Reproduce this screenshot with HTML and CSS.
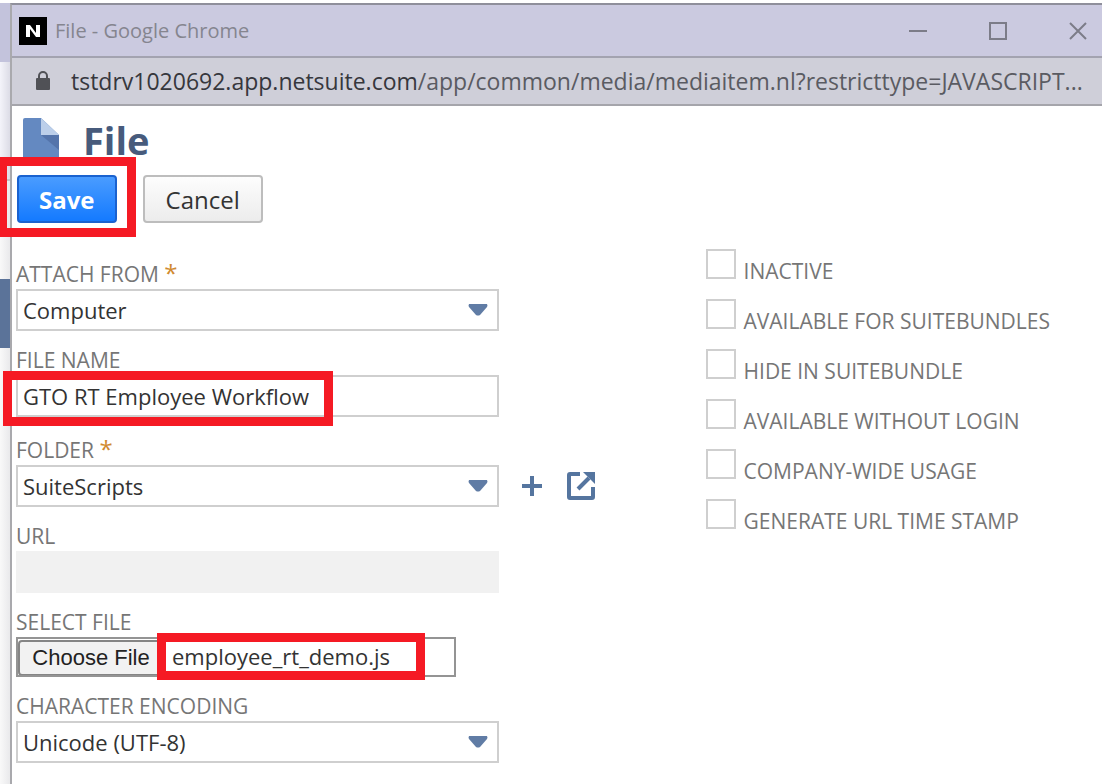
FILE: index.html
```html
<!DOCTYPE html>
<html lang="en">
<head>
    <meta charset="utf-8">
    <title>File</title>
    <link rel="stylesheet" href="styles.css">
</head>
<body>
    <div class="desktop">
        <!-- edge of the window behind the popup -->
        <div class="behind">
            <div class="behind-title"></div>
            <div class="behind-header"></div>
            <div class="behind-body"></div>
            <div class="behind-nav"></div>
        </div>
        <div class="window">
            <div class="titlebar">
                <svg class="favicon" width="28" height="28" viewBox="0 0 28 28">
                    <rect width="28" height="28" fill="#000"/>
                    <path d="M7 20V8h4l6 8V8h4v12h-4l-6-8v8z" fill="#fff"/>
                </svg>
                <span class="titlebar-text">File - Google Chrome</span>
                <div class="window-controls">
                    <button type="button" aria-label="Minimize"><svg width="18" height="18" viewBox="0 0 18 18"><path d="M0 9h18"/></svg></button>
                    <button type="button" aria-label="Maximize"><svg width="18" height="18" viewBox="0 0 18 18"><path d="M1 1h16v16H1z"/></svg></button>
                    <button type="button" aria-label="Close"><svg width="18" height="18" viewBox="0 0 18 18"><path d="M1 1l16 16M17 1L1 17"/></svg></button>
                </div>
            </div>
            <div class="addressbar">
                <svg class="lock" width="16" height="20" viewBox="0 0 16 20">
                    <path d="M4 8V5a4 4 0 0 1 8 0v3" fill="none" stroke="#505156" stroke-width="2"/>
                    <rect x="1" y="7" width="14" height="12" rx="1" fill="#505156"/>
                </svg>
                <span class="url"><span class="url-host">tstdrv1020692.app.netsuite.com</span>/app/common/media/mediaitem.nl?restricttype=JAVASCRIPT...</span>
            </div>
            <form class="page">
                <div class="page-title">
                    <svg width="36" height="40" viewBox="0 0 36 40">
                        <path d="M2 0h16l18 17v23H0V2a2 2 0 0 1 2-2z" fill="#6489c1"/>
                        <path d="M18 17h18v15z" fill="#5474ab"/>
                        <path d="M18 0l18 17H18z" fill="#bccfea"/>
                    </svg>
                    <h1>File</h1>
                </div>
                <div class="actions">
                    <span class="marked">
                        <button type="submit" class="btn btn-primary">Save</button>
                        <span class="mark mark-save"></span>
                    </span>
                    <button type="button" class="btn">Cancel</button>
                </div>
                <div class="columns">
                    <div class="fields">
                        <label class="label required" for="attach_from">ATTACH FROM <span class="star">*</span></label>
                        <div class="control">
                            <select id="attach_from"><option>Computer</option></select>
                            <svg class="arrow" width="20" height="12" viewBox="0 0 20 12"><path d="M1 0h18q1 2 0 3l-7 8q-2 1-4 0L1 3q-1-1 0-3z"/></svg>
                        </div>
                        <label class="label" for="file_name">FILE NAME</label>
                        <div class="control">
                            <input type="text" id="file_name" value="GTO RT Employee Workflow">
                            <span class="mark mark-name"></span>
                        </div>
                        <label class="label required" for="folder">FOLDER <span class="star">*</span></label>
                        <div class="control">
                            <select id="folder"><option>SuiteScripts</option></select>
                            <svg class="arrow" width="20" height="12" viewBox="0 0 20 12"><path d="M1 0h18q1 2 0 3l-7 8q-2 1-4 0L1 3q-1-1 0-3z"/></svg>
                            <div class="links">
                                <a href="#" aria-label="New"><svg width="20" height="20" viewBox="0 0 20 20"><path d="M10 0v20M0 10h20" stroke-width="4"/></svg></a>
                                <a href="#" aria-label="Open"><svg width="28" height="28" viewBox="0 0 28 28"><path d="M13 2H3q-1 0-1 1v22q0 1 1 1h22q1 0 1-1V15" stroke-width="4"/><path d="M11 17L22 6" stroke-width="4"/><path d="M16 0h12v12z" class="fill"/></svg></a>
                            </div>
                        </div>
                        <label class="label" for="url">URL</label>
                        <div class="control">
                            <input type="text" id="url" readonly>
                        </div>
                        <label class="label" for="select_file">SELECT FILE</label>
                        <div class="control">
                            <input type="file" id="select_file">
                            <span class="mark mark-file"></span>
                        </div>
                        <label class="label" for="encoding">CHARACTER ENCODING</label>
                        <div class="control">
                            <select id="encoding"><option>Unicode (UTF-8)</option></select>
                            <svg class="arrow" width="20" height="12" viewBox="0 0 20 12"><path d="M1 0h18q1 2 0 3l-7 8q-2 1-4 0L1 3q-1-1 0-3z"/></svg>
                        </div>
                    </div>
                    <div class="checks">
                        <label><input type="checkbox"><span>INACTIVE</span></label>
                        <label><input type="checkbox"><span>AVAILABLE FOR SUITEBUNDLES</span></label>
                        <label><input type="checkbox"><span>HIDE IN SUITEBUNDLE</span></label>
                        <label><input type="checkbox"><span>AVAILABLE WITHOUT LOGIN</span></label>
                        <label><input type="checkbox"><span>COMPANY-WIDE USAGE</span></label>
                        <label><input type="checkbox"><span>GENERATE URL TIME STAMP</span></label>
                    </div>
                </div>
            </form>
        </div>
    </div>
    <script src="script.js"></script>
</body>
</html>
```
FILE: styles.css
```css
* {
    box-sizing: border-box;
}
body {
    margin: 0;
    background: #fff;
    color: #333;
    font-family: "Open Sans", "Noto Sans", sans-serif;
    font-size: 22px;
}
.desktop {
    display: grid;
    grid-template-columns: 10px 1fr;
    min-height: 100vh;
    padding-top: 3px;
    overflow: hidden;
}
.behind {
    display: flex;
    flex-direction: column;
    background: linear-gradient(90deg, #f9f9f9, #e9e9eb);
}
.behind-title {
    height: 59px;
    background: #c3c3dc;
}
.behind-header {
    height: 119px;
    background: linear-gradient(90deg, #f4f4fa, #dcdce6);
    border-bottom: 2px solid #c4c4c8;
}
.behind-body {
    height: 98px;
}
.behind-nav {
    height: 69px;
    background: #5b7399;
}
.window {
    border-top: 2px solid #8f8f9b;
    border-left: 2px solid #a9a9ad;
    background: #fff;
}
.titlebar {
    display: flex;
    align-items: center;
    height: 53px;
    padding: 0 15px 0 7px;
    background: #cbcae0;
    border-bottom: 2px solid #a3a3b0;
}
.titlebar-text {
    margin-left: 8px;
    font-size: 20px;
    color: #85858f;
}
.window-controls {
    display: flex;
    gap: 62px;
    margin-left: auto;
}
.window-controls button {
    display: flex;
    padding: 0;
    border: 0;
    background: none;
}
.window-controls svg {
    fill: none;
    stroke: #7c7c88;
    stroke-width: 2;
}
.addressbar {
    display: flex;
    align-items: center;
    height: 48px;
    padding: 0 15px 0 23px;
    background: #cfcfd9;
    border-bottom: 2px solid #a5a5ab;
}
.url {
    margin-left: 20px;
    font-size: 23px;
    white-space: nowrap;
    color: #5a5b62;
}
.url-host {
    color: #36373d;
}
.page {
    padding: 12px 4px 20px;
}
.page-title {
    display: flex;
    gap: 24px;
    height: 40px;
    padding-left: 7px;
}
.page-title h1 {
    margin: 0;
    font-size: 38px;
    line-height: 44px;
    color: #475b7c;
}
.actions {
    display: flex;
    gap: 26px;
    padding: 17px 1px 34px;
}
.marked {
    position: relative;
}
.btn {
    display: block;
    height: 48px;
    padding: 0 21px;
    border: 2px solid #bdbdbd;
    border-radius: 4px;
    background: linear-gradient(#fdfdfd, #ececec);
    color: #333;
    font: 500 24px "Open Sans", sans-serif;
}
.btn-primary {
    padding: 0 20px;
    border-color: #1a62cf;
    background: linear-gradient(#4a9cff, #147aff);
    color: #fff;
    font-weight: 700;
}
.mark {
    position: absolute;
    border: 9px solid #f51a24;
    pointer-events: none;
}
.mark-save {
    top: -18px;
    right: -19px;
    bottom: -14px;
    left: -19px;
}
.mark-name {
    top: -4px;
    left: -13px;
    width: 330px;
    height: 55px;
}
.mark-file {
    top: -4px;
    left: 141px;
    width: 268px;
    height: 47px;
}
.columns {
    display: grid;
    grid-template-columns: 7fr 4fr;
}
.label {
    display: block;
    height: 44px;
    padding-top: 15px;
    font-size: 21px;
    line-height: 28px;
    color: #767676;
}
.label.required {
    height: 48px;
    padding-top: 19px;
}
.label:first-child {
    height: 32px;
    padding-top: 3px;
}
.star {
    font-size: 24px;
    line-height: 20px;
    color: #d08a30;
}
.control {
    position: relative;
    display: flex;
    align-items: center;
    width: 483px;
}
.control select,
.control input[type=text] {
    appearance: none;
    width: 100%;
    height: 42px;
    padding: 0 5px;
    border: 2px solid #cfcfcf;
    border-radius: 0;
    background: #fff;
    color: #333;
    font: 22px "Open Sans", sans-serif;
}
.control input[readonly] {
    border-color: #f1f1f1;
    background: #f1f1f1;
}
.arrow {
    position: absolute;
    right: 11px;
    fill: #607ca5;
    pointer-events: none;
}
.links {
    position: absolute;
    left: 100%;
    display: flex;
    align-items: center;
    gap: 25px;
    margin-left: 23px;
}
.links a {
    display: flex;
}
.links svg {
    fill: none;
    stroke: #55759f;
}
.links .fill {
    fill: #55759f;
    stroke: none;
}
.control input[type=file] {
    width: 440px;
    height: 40px;
    border: 2px solid #949494;
    color: #333;
    font: 22px "Open Sans", sans-serif;
    line-height: 34px;
}
.control input[type=file]::file-selector-button {
    width: 146px;
    height: 36px;
    margin: 0 8px 0 0;
    padding: 0;
    border: 2px solid #858585;
    border-radius: 4px;
    background: #f2f2f2;
    color: #222;
    font: 22px "Liberation Sans", Arial, sans-serif;
}
.checks {
    display: flex;
    flex-direction: column;
    align-items: flex-start;
    gap: 14px;
    margin-top: -8px;
    padding-left: 1px;
}
.checks label {
    display: flex;
    gap: 8px;
    height: 36px;
    font-size: 21px;
    line-height: 28px;
    color: #767676;
}
.checks span {
    align-self: flex-end;
}
.checks input {
    appearance: none;
    width: 30px;
    height: 30px;
    margin: 0;
    border: 2px solid #cfcfcf;
    background: #fff;
}
```
FILE: script.js
```js
// preselect the uploaded file
var transfer = new DataTransfer();
transfer.items.add(new File([''], 'employee_rt_demo.js'));
document.getElementById('select_file').files = transfer.files;
```
